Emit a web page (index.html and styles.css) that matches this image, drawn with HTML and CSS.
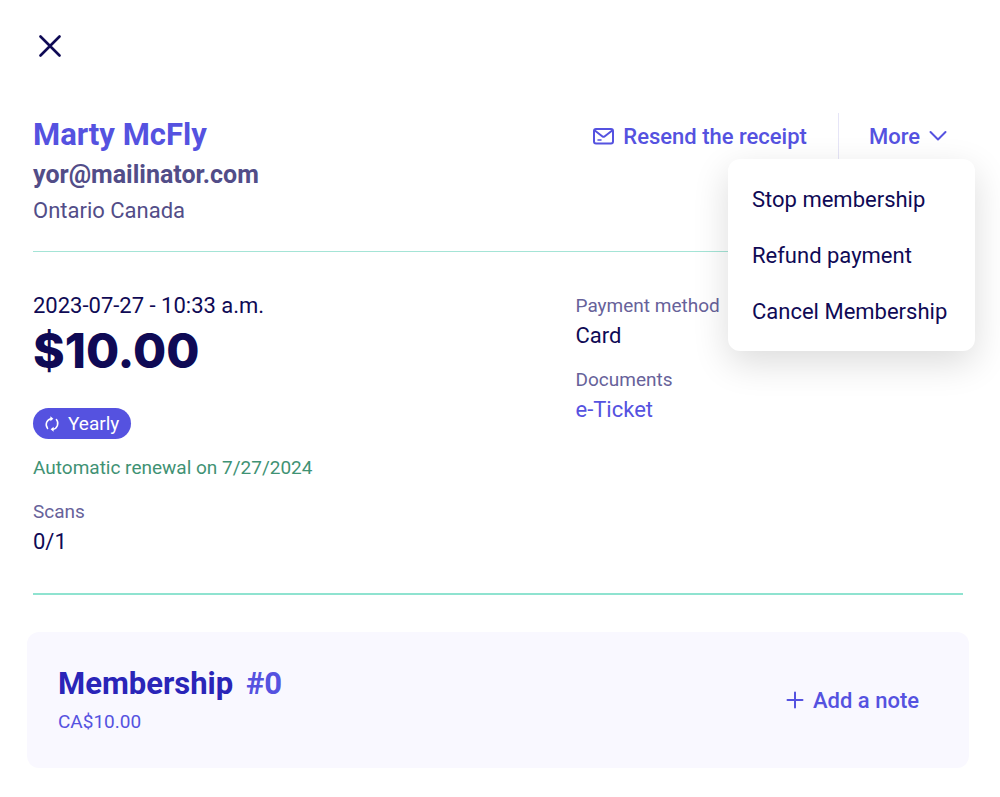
FILE: index.html
```html
<!DOCTYPE html>
<html lang="en">
<head>
    <meta charset="UTF-8">
    <meta name="viewport" content="width=device-width, initial-scale=1.0">
    <title>Membership - Marty McFly</title>
    <link rel="stylesheet" href="styles.css">
</head>
<body>
    <main class="page">
        <button class="close" type="button" aria-label="Close">
            <svg width="22" height="22" viewBox="0 0 22 22" fill="none" stroke="currentColor" stroke-width="2.6" stroke-linecap="round">
                <path d="M1.5 1.5l19 19M20.5 1.5l-19 19"/>
            </svg>
        </button>

        <header class="header">
            <div class="customer">
                <h1 class="name">Marty McFly</h1>
                <p class="email">yor@mailinator.com</p>
                <p class="location">Ontario Canada</p>
            </div>
            <div class="actions">
                <button class="action" type="button">
                    <svg width="21" height="17" viewBox="0 0 21 17" fill="none" stroke="currentColor" stroke-width="2" stroke-linecap="round" stroke-linejoin="round">
                        <rect x="1" y="1" width="19" height="14.5" rx="2"/>
                        <path d="M1.8 2.5l7.7 6q1 .7 2 0l7.7-6"/>
                        <path d="M5 12h3" stroke-width="1.5"/>
                    </svg>
                    Resend the receipt
                </button>
                <div class="more">
                    <button class="action" type="button" aria-expanded="true">
                        More
                        <svg width="18" height="12" viewBox="0 0 18 12" fill="none" stroke="currentColor" stroke-width="2" stroke-linecap="round" stroke-linejoin="round">
                            <path d="M1.5 2L9 9.5 16.5 2"/>
                        </svg>
                    </button>
                    <div class="menu">
                        <button class="menu-item" type="button">Stop membership</button>
                        <button class="menu-item" type="button">Refund payment</button>
                        <button class="menu-item" type="button">Cancel Membership</button>
                    </div>
                </div>
            </div>
        </header>

        <section class="details">
            <div class="payment">
                <p class="value">2023-07-27 - 10:33 a.m.</p>
                <p class="price">$10.00</p>
                <span class="badge">
                    <svg width="16" height="16" viewBox="0 0 16 16" fill="none" stroke="currentColor" stroke-width="1.5" stroke-linecap="round">
                        <path d="M3.6 12.4A6 6 0 0 1 7 2.7"/>
                        <path d="M12.4 3.6A6 6 0 0 1 9 13.3"/>
                        <path d="M6.4.2L9.4 2.7 6.4 5.2z" fill="currentColor" stroke="none"/>
                        <path d="M9.6 15.8L6.6 13.3 9.6 10.8z" fill="currentColor" stroke="none"/>
                    </svg>
                    Yearly
                </span>
                <p class="renewal">Automatic renewal on 7/27/2024</p>
                <p class="label">Scans</p>
                <p class="value">0/1</p>
            </div>
            <div class="info">
                <p class="label">Payment method</p>
                <p class="value">Card</p>
                <p class="label">Documents</p>
                <a class="value link" href="#">e-Ticket</a>
            </div>
        </section>

        <section class="card">
            <div>
                <h2 class="card-title">Membership <span class="number">#0</span></h2>
                <p class="card-price">CA$10.00</p>
            </div>
            <button class="action" type="button">
                <svg width="18" height="18" viewBox="0 0 18 18" fill="none" stroke="currentColor" stroke-width="2" stroke-linecap="round">
                    <path d="M9 1.5v15M1.5 9h15"/>
                </svg>
                Add a note
            </button>
        </section>
    </main>
</body>
</html>
```

FILE: styles.css
```css
* {
    box-sizing: border-box;
}
body {
    margin: 0;
    background-color: #fff;
    color: #0f0a55;
    font-family: Roboto, sans-serif;
    font-size: 22px;
}
h1, h2, p {
    margin: 0;
}
button {
    padding: 0;
    border: none;
    background: none;
    font-family: inherit;
    color: inherit;
    cursor: pointer;
}
svg {
    display: block;
    flex: none;
}
.page {
    padding: 29px 37px 28px 33px;
}
.close {
    display: block;
    padding: 6px;
}
.header {
    display: flex;
    justify-content: space-between;
    margin-top: 50px;
    padding-bottom: 22px;
    border-bottom: 1px solid #a4e4d6;
}
.name {
    line-height: 44px;
    font-size: 31px;
    color: #5552e0;
}
.email {
    line-height: 36px;
    font-size: 25px;
    font-weight: bold;
    color: #524d88;
}
.location {
    line-height: 36px;
    color: #524d88;
}
.actions {
    display: flex;
    align-items: flex-start;
}
.action {
    display: flex;
    align-items: center;
    gap: 9px;
    height: 46px;
    font-size: 22px;
    font-weight: 500;
    color: #5552e0;
}
.more {
    position: relative;
    margin-left: 31px;
    padding: 0 16px 0 30px;
    border-left: 1px solid #e6e5f7;
}
.menu {
    position: absolute;
    top: 46px;
    right: -12px;
    width: 247px;
    padding: 12px 0;
    border-radius: 12px;
    background: #fff;
    box-shadow: 0 12px 36px rgba(0, 0, 0, 0.14);
}
.menu-item {
    display: block;
    width: 100%;
    height: 56px;
    padding: 0 24px;
    font-size: 22px;
    text-align: left;
    white-space: nowrap;
}
.details {
    display: grid;
    grid-template-columns: 7fr 5fr;
    padding: 39px 0 36px;
    border-bottom: 2px solid #8fe3d0;
}
.value {
    line-height: 30px;
}
.label {
    line-height: 30px;
    font-size: 19px;
    color: #67629a;
}
.value + .label {
    margin-top: 14px;
}
.link {
    color: #5552e0;
    text-decoration: none;
}
.price {
    line-height: 60px;
    font-family: Inter, sans-serif;
    font-size: 48px;
    font-weight: 800;
}
.badge {
    display: flex;
    align-items: center;
    gap: 8px;
    width: fit-content;
    height: 31px;
    margin-top: 27px;
    padding: 0 12px 0 11px;
    border-radius: 16px;
    background: #5552e0;
    font-size: 19px;
    color: #fff;
}
.renewal {
    margin: 14px 0;
    line-height: 30px;
    font-size: 19px;
    color: #3f9274;
}
.card {
    display: flex;
    justify-content: space-between;
    align-items: center;
    margin: 37px -6px 0;
    padding: 30px 50px 30px 31px;
    border-radius: 12px;
    background: #f9f8ff;
}
.card-title {
    line-height: 44px;
    font-size: 31px;
    color: #2a25b8;
}
.number {
    margin-left: 5px;
    color: #5552e0;
}
.card-price {
    line-height: 32px;
    font-size: 19px;
    color: #5552e0;
}
```
